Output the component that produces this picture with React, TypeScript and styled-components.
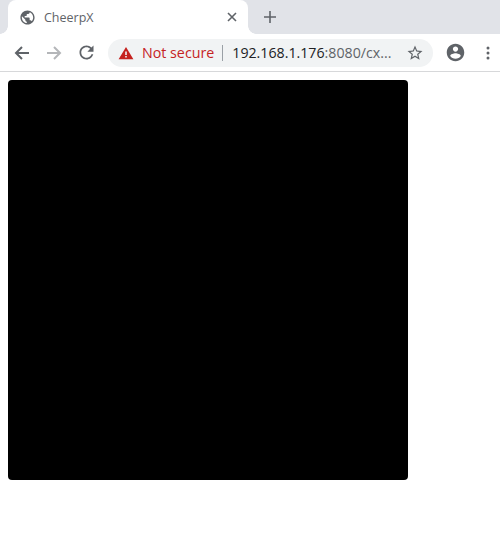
import React from "react";
import styled, { createGlobalStyle } from "styled-components";

const Global = createGlobalStyle`
  html, body { margin: 0; padding: 0; background: #fff; }
  body { font-family: "Open Sans", "Liberation Sans", sans-serif; }
`;

const Page = styled.div`
  width: 500px;
  height: 550px;
  overflow: hidden;
  background: #fff;
  display: flex;
  flex-direction: column;
`;

const TabStrip = styled.div`
  height: 34px;
  background: #e1e3e8;
  display: flex;
  align-items: flex-end;
  padding-left: 8px;
  flex: none;
`;

const Tab = styled.div`
  position: relative;
  width: 240px;
  height: 34px;
  background: #fff;
  border-radius: 8px 8px 0 0;
  display: flex;
  align-items: center;
  padding: 0 11px 0 11px;
  box-sizing: border-box;
  &::before, &::after {
    content: "";
    position: absolute;
    bottom: 0;
    width: 8px;
    height: 8px;
    background: radial-gradient(circle at var(--cx) 0, #e1e3e8 7.5px, #fff 8px);
  }
  &::before { left: -8px; --cx: 0; }
  &::after { right: -8px; --cx: 100%; }
`;

const TabTitle = styled.span`
  flex: 1;
  margin-left: 8px;
  font-size: 12.5px;
  color: #5f6368;
`;

const NewTab = styled.div`
  width: 28px;
  height: 28px;
  margin: 0 0 3px 8px;
  display: flex;
  align-items: center;
  justify-content: center;
`;

const Toolbar = styled.div`
  height: 37px;
  flex: none;
  box-sizing: border-box;
  background: #fff;
  display: flex;
  align-items: center;
  padding: 0 0 0 10px;
`;

const NavButton = styled.div<{ $gap?: number; $left?: number }>`
  width: 24px;
  height: 24px;
  margin-right: ${(p) => p.$gap ?? 0}px;
  margin-left: ${(p) => p.$left ?? 0}px;
  display: flex;
  align-items: center;
  justify-content: center;
  flex: none;
`;

const Omnibox = styled.div`
  width: 325px;
  height: 28px;
  margin-left: 10px;
  box-sizing: border-box;
  background: #f1f3f4;
  border-radius: 14px;
  display: flex;
  align-items: center;
  padding: 0 9px 0 10px;
  flex: none;
`;

const Warning = styled.span`
  margin-left: 8px;
  font-size: 14.25px;
  color: #c5221f;
  white-space: nowrap;
`;

const Divider = styled.span`
  width: 1px;
  height: 16px;
  margin: 0 9px 0 8px;
  background: #9aa0a6;
  flex: none;
`;

const Url = styled.span`
  flex: 1;
  font-size: 14.2px;
  color: #202124;
  white-space: nowrap;
`;

const Port = styled.span`
  color: #5f6368;
`;

const Separator = styled.div`
  height: 1px;
  background: #d7d8da;
  flex: none;
`;

const Content = styled.div`
  flex: 1;
  padding: 8px;
`;

const Screen = styled.div`
  width: 400px;
  height: 400px;
  background: #000;
  border-radius: 4px;
`;

const Globe = () => (
  <svg width="17" height="17" viewBox="0 0 24 24" fill="#5f6368">
    <path d="M12 2C6.48 2 2 6.48 2 12s4.48 10 10 10 10-4.48 10-10S17.52 2 12 2zm-1 17.93c-3.95-.49-7-3.85-7-7.93 0-.62.08-1.21.21-1.79L9 15v1c0 1.1.9 2 2 2v1.93zm6.9-2.54c-.26-.81-1-1.39-1.9-1.39h-1v-3c0-.55-.45-1-1-1H8v-2h2c.55 0 1-.45 1-1V7h2c1.1 0 2-.9 2-2v-.41c2.93 1.19 5 4.06 5 7.41 0 2.08-.8 3.97-2.1 5.39z" />
  </svg>
);

const ArrowSvg = styled.svg<{ $flip?: boolean }>`
  transform: ${(p) => (p.$flip ? "scaleX(-1)" : "none")};
`;

const Arrow = ({ color, flip }: { color: string; flip?: boolean }) => (
  <ArrowSvg $flip={flip} width="16" height="16" viewBox="0 0 16 16" fill="none" stroke={color} strokeWidth="2">
    <path d="M15 8H2M8 2L2 8l6 6" />
  </ArrowSvg>
);

const Reload = () => (
  <svg width="21" height="21" viewBox="0 0 24 24" fill="#5f6368">
    <path d="M17.65 6.35C16.2 4.9 14.21 4 12 4c-4.42 0-7.99 3.58-7.99 8s3.57 8 7.99 8c3.73 0 6.84-2.55 7.73-6h-2.08c-.82 2.33-3.04 4-5.65 4-3.31 0-6-2.69-6-6s2.69-6 6-6c1.66 0 3.14.69 4.22 1.78L13 11h7V4l-2.35 2.35z" />
  </svg>
);

const Alert = () => (
  <svg width="16" height="16" viewBox="0 0 16 16" fill="#c5221f">
    <path fillRule="evenodd" d="M8 2L0.6 14.2h14.8L8 2zM8.8 12.6H7.2v-1.5h1.6v1.5zm0-2.6H7.2V6.6h1.6V10z" />
  </svg>
);

const Star = () => (
  <svg width="18" height="18" viewBox="0 0 24 24" fill="#5f6368">
    <path d="M22 9.24l-7.19-.62L12 2 9.19 8.63 2 9.24l5.46 4.73L5.82 21 12 17.27 18.18 21l-1.63-7.03L22 9.24zM12 15.4l-3.76 2.27 1-4.28-3.32-2.88 4.38-.38L12 6.1l1.71 4.04 4.38.38-3.32 2.88 1 4.28L12 15.4z" />
  </svg>
);

const Account = () => (
  <svg width="21" height="21" viewBox="0 0 24 24" fill="#5f6368">
    <path d="M12 2C6.48 2 2 6.48 2 12s4.48 10 10 10 10-4.48 10-10S17.52 2 12 2zm0 3c1.66 0 3 1.34 3 3s-1.34 3-3 3-3-1.34-3-3 1.34-3 3-3zm0 14.2c-2.5 0-4.71-1.28-6-3.22.03-1.99 4-3.08 6-3.08 1.99 0 5.97 1.09 6 3.08-1.29 1.94-3.5 3.22-6 3.22z" />
  </svg>
);

const Dots = () => (
  <svg width="4" height="14" viewBox="0 0 4 14" fill="#5f6368">
    <circle cx="2" cy="2" r="1.5" />
    <circle cx="2" cy="7" r="1.5" />
    <circle cx="2" cy="12" r="1.5" />
  </svg>
);

const Close = () => (
  <svg width="10" height="10" viewBox="0 0 10 10" stroke="#5f6368" strokeWidth="1.6">
    <path d="M1 1l8 8M9 1l-8 8" />
  </svg>
);

const Plus = () => (
  <svg width="12" height="12" viewBox="0 0 12 12" stroke="#5f6368" strokeWidth="1.6">
    <path d="M6 0v12M0 6h12" />
  </svg>
);

export default function App() {
  return (
    <Page>
      <Global />
      <TabStrip>
        <Tab>
          <Globe />
          <TabTitle>CheerpX</TabTitle>
          <Close />
        </Tab>
        <NewTab>
          <Plus />
        </NewTab>
      </TabStrip>
      <Toolbar>
        <NavButton $gap={8}>
          <Arrow color="#5f6368" />
        </NavButton>
        <NavButton $gap={8}>
          <Arrow color="#b4b6b9" flip />
        </NavButton>
        <NavButton>
          <Reload />
        </NavButton>
        <Omnibox>
          <Alert />
          <Warning>Not secure</Warning>
          <Divider />
          <Url>
            192.168.1.176<Port>:8080/cx...</Port>
          </Url>
          <Star />
        </Omnibox>
        <NavButton $left={10}>
          <Account />
        </NavButton>
        <NavButton $left={9}>
          <Dots />
        </NavButton>
      </Toolbar>
      <Separator />
      <Content>
        <Screen />
      </Content>
    </Page>
  );
}
